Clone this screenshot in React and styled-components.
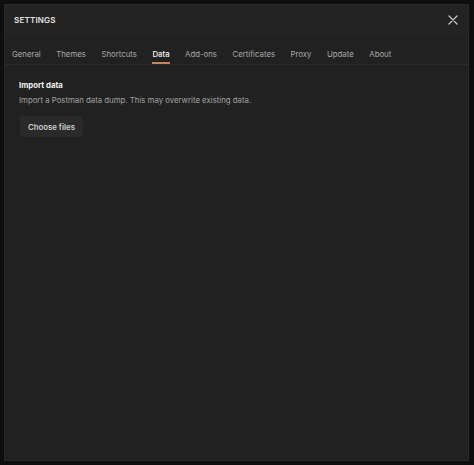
import React, { useState } from "react";
import styled, { createGlobalStyle } from "styled-components";

const Global = createGlobalStyle`
  html, body {
    margin: 0;
    padding: 0;
    background: #0e0e0e;
    font-family: Inter, "Noto Sans", sans-serif;
  }
  * { box-sizing: border-box; }
`;

const Backdrop = styled.div`
  width: 474px;
  height: 465px;
  padding: 4px 5px 4px 4px;
`;

const Modal = styled.div`
  height: 100%;
  background: #212121;
  border: 1px solid #2a2a2a;
  display: flex;
  flex-direction: column;
`;

const Header = styled.div`
  height: 30px;
  background: #232323;
  display: flex;
  align-items: center;
  justify-content: space-between;
  padding: 0 9px 0 9px;
`;

const Title = styled.h2`
  margin: 0;
  font-size: 8px;
  font-weight: 600;
  letter-spacing: 0.2px;
  color: #e2e2e2;
  text-transform: uppercase;
`;

const Close = styled.button`
  background: none;
  border: none;
  padding: 0;
  width: 12px;
  height: 12px;
  display: flex;
  align-items: center;
  justify-content: center;
  cursor: pointer;
`;

const Tabs = styled.nav`
  height: 30px;
  display: flex;
  align-items: stretch;
  gap: 15.5px;
  padding: 0 7px;
  border-bottom: 1px solid #2b2b2b;
`;

const Tab = styled.div`
  position: relative;
  display: flex;
  align-items: center;
  padding-top: 8px;
  font-size: 7.8px;
  color: ${(p) => (p.active ? "#f2f2f2" : "#a8a8a8")};
  font-weight: ${(p) => (p.active ? 500 : 400)};
  cursor: pointer;
  &::after {
    content: "";
    display: ${(p) => (p.active ? "block" : "none")};
    position: absolute;
    left: 0;
    right: 0;
    bottom: 0;
    height: 2px;
    background: #c4835f;
  }
`;

const Body = styled.section`
  padding: 15px 14px;
  display: flex;
  flex-direction: column;
  align-items: flex-start;
`;

const Heading = styled.h3`
  margin: 0;
  font-size: 7.8px;
  font-weight: 700;
  color: #f0f0f0;
`;

const Text = styled.p`
  margin: 5px 0 0;
  font-size: 7.8px;
  color: #a3a3a3;
`;

const Button = styled.button`
  margin: 11px 0 0 1px;
  height: 21px;
  padding: 0 8px;
  background: #2a2a2a;
  border: none;
  border-radius: 3px;
  color: #cfcfcf;
  font-family: inherit;
  font-size: 7.8px;
  font-weight: 600;
`;

const tabs = ["General", "Themes", "Shortcuts", "Data", "Add-ons", "Certificates", "Proxy", "Update", "About"];

export default function App() {
  const [active, setActive] = useState("Data");
  return (
    <>
      <Global />
      <Backdrop>
        <Modal>
          <Header>
            <Title>Settings</Title>
            <Close aria-label="close">
              <svg width="10" height="10" viewBox="0 0 10 10">
                <path d="M1 1L9 9M9 1L1 9" stroke="#c4c4c4" strokeWidth="1.3" strokeLinecap="round" />
              </svg>
            </Close>
          </Header>
          <Tabs>
            {tabs.map((t) => (
              <Tab key={t} active={t === active} onClick={() => setActive(t)}>
                {t}
              </Tab>
            ))}
          </Tabs>
          <Body>
            <Heading>Import data</Heading>
            <Text>Import a Postman data dump. This may overwrite existing data.</Text>
            <Button>Choose files</Button>
          </Body>
        </Modal>
      </Backdrop>
    </>
  );
}
